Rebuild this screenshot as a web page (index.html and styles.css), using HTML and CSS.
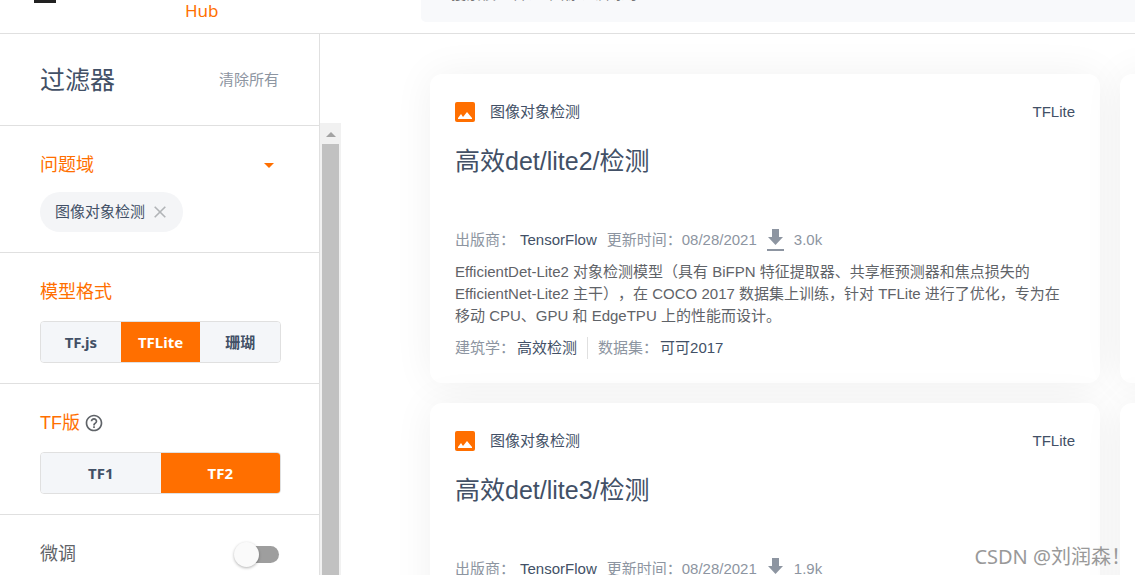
FILE: index.html
```html
<!DOCTYPE html>
<html lang="zh-CN">
<head>
  <meta charset="UTF-8"/>
  <meta name="viewport" content="width=device-width,initial-scale=1.0"/>
  <title>TensorFlow Hub</title>
  <link rel="stylesheet" href="styles.css">
</head>
<body>

<header class="topbar">
  <button class="menu" aria-label="菜单"></button>
  <a class="logo" href="#">Hub</a>
  <input class="search" type="text" aria-label="搜索" placeholder="搜索模型名、 &nbsp;图像、训练等">
</header>

<div class="layout">
  <aside class="sidebar">
    <div class="filter-head">
      <h1>过滤器</h1>
      <button class="clear">清除所有</button>
    </div>

    <section class="filter">
      <div class="filter-title">
        <h2>问题域</h2>
        <button class="toggle" aria-label="展开问题域"><svg width="10" height="5" viewBox="0 0 10 5"><path d="M0 0h10L5 5z" fill="#ff6f00"/></svg></button>
      </div>
      <button class="chip">图像对象检测
        <svg width="12" height="12" viewBox="0 0 12 12"><path d="M0.7 0.7l10.6 10.6M11.3 0.7L0.7 11.3" stroke="#b1b4b7" stroke-width="1.6"/></svg>
      </button>
    </section>

    <section class="filter">
      <div class="filter-title"><h2>模型格式</h2></div>
      <div class="segments">
        <button>TF.js</button>
        <button class="active">TFLite</button>
        <button>珊瑚</button>
      </div>
    </section>

    <section class="filter">
      <div class="filter-title">
        <h2>TF版</h2>
        <svg class="help" width="20" height="20" viewBox="0 0 24 24"><path fill="#5f6368" d="M11 18h2v-2h-2v2zm1-16C6.480 2 2 6.480 2 12s4.480 10 10 10 10-4.480 10-10S17.520 2 12 2zm0 18c-4.410 0-8-3.590-8-8s3.590-8 8-8 8 3.590 8 8-3.590 8-8 8zm0-14c-2.210 0-4 1.790-4 4h2c0-1.100.9-2 2-2s2 .9 2 2c0 2-3 1.750-3 5h2c0-2.250 3-2.500 3-5 0-2.210-1.790-4-4-4z"/></svg>
      </div>
      <div class="segments">
        <button>TF1</button>
        <button class="active">TF2</button>
      </div>
    </section>

    <section class="filter">
      <div class="filter-title tune">
        <label for="fine-tune">微调</label>
        <input class="switch" id="fine-tune" type="checkbox">
      </div>
    </section>
  </aside>

  <div class="scrollbar">
    <svg width="10" height="5" viewBox="0 0 10 5"><path d="M0 5L5 0l5 5z" fill="#a3a3a3"/></svg>
    <div class="thumb"></div>
  </div>

  <main class="results">
    <article class="card">
      <div class="card-top">
        <svg width="20" height="20" viewBox="0 0 20 20"><rect width="20" height="20" rx="2" fill="#ff6f00"/><path d="M3 17v-1l3-4 2 3 4-5 5 6v1z" fill="#fff"/></svg>
        <span>图像对象检测</span>
        <span class="format">TFLite</span>
      </div>
      <h3>高效det/lite2/检测</h3>
      <div class="meta">
        <span>出版商：</span><a href="#">TensorFlow</a>
        <span class="updated">更新时间：</span><span>08/28/2021</span>
        <svg width="17" height="22" viewBox="0 0 17 22"><path d="M5 0h7v8h4l-7.500 8L1 8h4zM0 20h17v2H0z" fill="#8d95a1"/></svg>
        <span>3.0k</span>
      </div>
      <p>EfficientDet-Lite2 对象检测模型（具有 BiFPN 特征提取器、共享框预测器和焦点损失的 EfficientNet-Lite2 主干），在 COCO 2017 数据集上训练，针对 TFLite 进行了优化，专为在移动 CPU、GPU 和 EdgeTPU 上的性能而设计。</p>
      <div class="tags">
        <div><span>建筑学：</span><b>高效检测</b></div>
        <div><span>数据集：</span><b>可可2017</b></div>
      </div>
    </article>
    <article class="card"></article>

    <article class="card">
      <div class="card-top">
        <svg width="20" height="20" viewBox="0 0 20 20"><rect width="20" height="20" rx="2" fill="#ff6f00"/><path d="M3 17v-1l3-4 2 3 4-5 5 6v1z" fill="#fff"/></svg>
        <span>图像对象检测</span>
        <span class="format">TFLite</span>
      </div>
      <h3>高效det/lite3/检测</h3>
      <div class="meta">
        <span>出版商：</span><a href="#">TensorFlow</a>
        <span class="updated">更新时间：</span><span>08/28/2021</span>
        <svg width="17" height="22" viewBox="0 0 17 22"><path d="M5 0h7v8h4l-7.500 8L1 8h4zM0 20h17v2H0z" fill="#8d95a1"/></svg>
        <span>1.9k</span>
      </div>
    </article>
    <article class="card"></article>
  </main>
</div>

<div class="watermark">CSDN @刘润森！</div>

</body>
</html>
```
FILE: styles.css
```css
/* ========== Base ========== */
* { margin:0; padding:0; box-sizing:border-box }
body {
  height: 100vh;
  overflow: hidden;
  display: flex;
  flex-direction: column;
  font-family: "Liberation Sans","Noto Sans CJK SC",sans-serif;
  font-size: 15px;
  line-height: 20px;
  text-spacing-trim: space-all;
  background: #fff;
  color: #425066;
}
button { border:0; background:none; font:inherit; color:inherit; cursor:pointer }
a { color:inherit; text-decoration:none }
h1, h2, h3, b { font-weight:normal }
svg { display:block; flex:none }

/* ========== Top bar ========== */
.topbar {
  display: flex;
  align-items: flex-end;
  flex: none;
  height: 34px;
  overflow: hidden;
  border-bottom: 1px solid #e0e0e0;
}
.menu {
  width: 22px;
  height: 18px;
  margin: 0 129px 30px 34px;
  border-top: 3px solid #212121;
  border-bottom: 3px solid #212121;
}
.logo {
  width: 236px;
  padding-bottom: 10px;
  font: 17px/24px "Noto Sans",sans-serif;
  color: #ff6f00;
}
.search {
  flex: 1;
  height: 50px;
  margin-bottom: 11px;
  padding: 0 30px 8px;
  border: 0;
  border-radius: 5px 0 0 5px;
  background: #f8f9fb;
  font: inherit;
}
.search::placeholder { color:#757575 }

/* ========== Sidebar ========== */
.layout { display:flex; flex:1; min-height:0 }
.sidebar {
  flex: none;
  width: 320px;
  overflow: hidden;
  border-right: 1px solid #e0e0e0;
}
.filter-head {
  display: flex;
  align-items: center;
  justify-content: space-between;
  height: 92px;
  padding: 0 40px;
  border-bottom: 1px solid #e0e0e0;
}
h1 { font-size:25px; line-height:32px }
.clear { color:#8d95a1 }
.filter { padding:27px 38px 20px 40px; border-bottom:1px solid #e0e0e0 }
.filter-title { display:flex; align-items:center; height:24px; margin-bottom:17px }
h2 { font-size:18px; color:#ff6f00 }
.toggle { margin-left:auto; padding:5px 7px }
.help { margin-left:4px }
.tune { justify-content:space-between; font-size:18px; color:#5f6368 }
.chip {
  display: flex;
  align-items: center;
  gap: 9px;
  height: 40px;
  margin-top: -2px;
  padding: 0 17px 0 15px;
  border-radius: 20px;
  background: #f4f5f7;
}
.segments {
  display: flex;
  height: 42px;
  overflow: hidden;
  border: 1px solid #e0e0e0;
  border-radius: 4px;
}
.segments button {
  flex: 1;
  background: #f4f6f9;
  font: bold 15px/20px "Noto Sans","Noto Sans CJK SC",sans-serif;
}
.segments .active { background:#ff6f00; color:#fff }
.switch {
  appearance: none;
  display: flex;
  align-items: center;
  width: 43px;
  height: 17px;
  margin-right: 2px;
  border-radius: 9px;
  background: #9e9e9e;
}
.switch::before {
  content: "";
  width: 25px;
  height: 25px;
  margin-left: -2px;
  border-radius: 50%;
  background: #fafafa;
  box-shadow: 0 1px 3px rgba(0,0,0,0.3);
}

/* ========== Scrollbar ========== */
.scrollbar {
  display: flex;
  flex-direction: column;
  align-items: center;
  flex: none;
  width: 21px;
  margin-top: 89px;
  padding-top: 9px;
  background: #f1f1f1;
}
.thumb { flex:1; width:17px; margin-top:7px; background:#c1c1c1 }

/* ========== Cards ========== */
.results {
  display: grid;
  grid-template-columns: repeat(2, minmax(670px, 1fr));
  grid-auto-rows: max-content;
  gap: 20px;
  flex: 1;
  padding: 40px 0 0 89px;
  overflow: hidden;
}
.card {
  min-height: 309px;
  padding: 25px 25px 23px;
  border-radius: 12px;
  background: #fff;
  box-shadow: 0 0 40px rgba(0,0,0,0.06);
}
.card-top { display:flex; align-items:center; gap:15px; height:26px }
.format { margin-left:auto }
h3 { margin-top:16px; font-size:25px; line-height:40px }
.meta {
  display: flex;
  align-items: center;
  height: 24px;
  margin-top: 47px;
  color: #8d95a1;
}
.meta a { margin:0 10px 0 5px; color:#425066 }
.meta svg { margin:0 10px }
.card p { margin-top:9px; padding-right:10px; line-height:22px; color:#5f6368 }
.tags { display:flex; margin-top:10px; line-height:22px; color:#8d95a1 }
.tags div + div { margin-left:10px; padding-left:10px; border-left:1px solid #e0e0e0 }
.tags b { margin-left:2px; color:#425066 }

.watermark {
  position: absolute;
  right: 4px;
  bottom: 5px;
  font: 20px/26px "Noto Sans","Noto Sans CJK TC",sans-serif;
  color: #999;
}
```
